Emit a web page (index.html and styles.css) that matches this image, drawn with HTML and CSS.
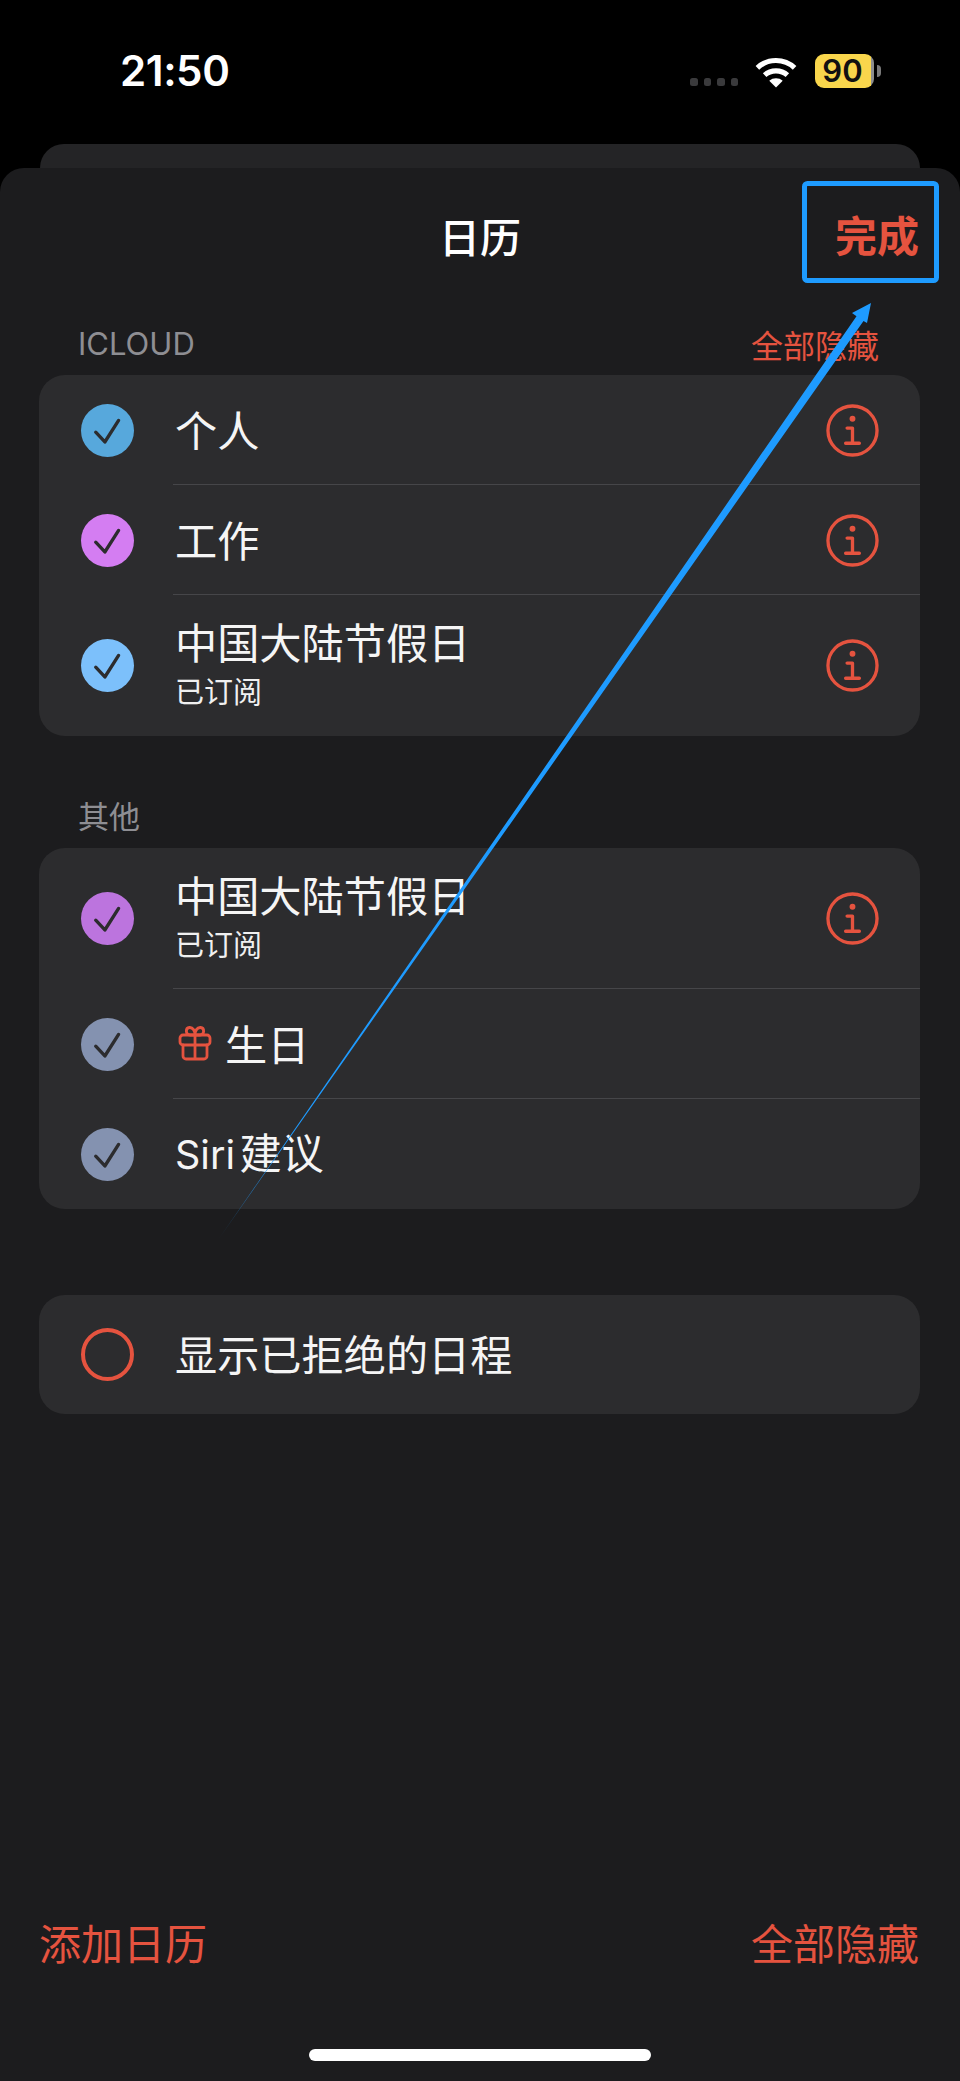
FILE: index.html
```html
<!DOCTYPE html>
<html lang="zh-CN">
<head>
<meta charset="utf-8">
<title>日历</title>
<link rel="stylesheet" href="styles.css">
</head>
<body>
<svg width="0" height="0" class="defs">
  <symbol id="check" viewBox="0 0 54 54"><path d="M15 28.7 24.3 38.7 38.3 16.7" fill="none" stroke="#2c2c2e" stroke-width="3.4" stroke-linecap="round" stroke-linejoin="round"/></symbol>
  <symbol id="info" viewBox="0 0 54 54"><circle cx="27" cy="27" r="25" fill="none" stroke="#e5533f" stroke-width="3.400"/><circle cx="27" cy="15" r="3" fill="#e5533f"/><path d="M21.500 24.500H27V40M20 40H34" fill="none" stroke="#e5533f" stroke-width="3.400" stroke-linecap="round" stroke-linejoin="round"/></symbol>
</svg>
<div class="page">
  <header class="status">
    <div class="time">21:50</div>
    <div class="status-right">
      <div class="signal"><i></i><i></i><i></i><i></i></div>
      <svg class="wifi" viewBox="0 0 42 30" width="44" height="31"><g fill="none" stroke="#fff" stroke-width="5"><path d="M3 10.500C13 1 29 1 39 10.500"/><path d="M10 17.500C16 12 26 12 32 17.500"/></g><path d="M14.500 23C18 19.800 24 19.800 27.500 23L21 29.500Z" fill="#fff"/></svg>
      <div class="battery"><span class="batt-body">90</span><span class="batt-nub"></span></div>
    </div>
  </header>
  <div class="back-sheet"></div>
  <main class="sheet">
    <div class="nav">
      <h1 class="title">日历</h1>
      <span class="done">完成</span>
    </div>
    <div class="section-head head-first">
      <span class="label label-latin">ICLOUD</span>
      <span class="hide-link">全部隐藏</span>
    </div>
    <section class="card">
      <div class="row">
        <span class="dot dot-blue"><svg class="check"><use href="#check"/></svg></span>
        <div class="row-text"><div class="main">个人</div></div>
        <svg class="info"><use href="#info"/></svg>
      </div>
      <div class="row">
        <span class="dot dot-violet"><svg class="check"><use href="#check"/></svg></span>
        <div class="row-text"><div class="main">工作</div></div>
        <svg class="info"><use href="#info"/></svg>
      </div>
      <div class="row row-tall">
        <span class="dot dot-sky"><svg class="check"><use href="#check"/></svg></span>
        <div class="row-text"><div class="main">中国大陆节假日</div><div class="sub">已订阅</div></div>
        <svg class="info"><use href="#info"/></svg>
      </div>
    </section>
    <div class="section-head head-second">
      <span class="label">其他</span>
    </div>
    <section class="card">
      <div class="row row-tall">
        <span class="dot dot-purple"><svg class="check"><use href="#check"/></svg></span>
        <div class="row-text"><div class="main">中国大陆节假日</div><div class="sub">已订阅</div></div>
        <svg class="info"><use href="#info"/></svg>
      </div>
      <div class="row">
        <span class="dot dot-slate"><svg class="check"><use href="#check"/></svg></span>
        <div class="row-text"><div class="main main-gift">
          <svg class="gift" viewBox="0 0 34 36" width="34" height="36"><g fill="none" stroke="#e5533f" stroke-width="2.800" stroke-linejoin="round" stroke-linecap="round"><rect x="2" y="10" width="30" height="10" rx="3"/><path d="M5 20V31a3 3 0 0 0 3 3H26a3 3 0 0 0 3-3V20M17 10V34"/><path d="M17 10H12C7.500 10 7 3 11.500 2.500 15 2.200 17 6 17 10ZM17 10H22C26.500 10 27 3 22.500 2.500 19 2.200 17 6 17 10Z"/></g></svg>
          <span>生日</span>
        </div></div>
      </div>
      <div class="row">
        <span class="dot dot-slate"><svg class="check"><use href="#check"/></svg></span>
        <div class="row-text"><div class="main main-mixed"><span class="latin">Siri</span> 建议</div></div>
      </div>
    </section>
    <section class="card card-single">
      <div class="row row-single">
        <span class="dot dot-empty"></span>
        <div class="row-text"><div class="main">显示已拒绝的日程</div></div>
      </div>
    </section>
    <footer class="footer">
      <span>添加日历</span>
      <span>全部隐藏</span>
    </footer>
    <div class="home"></div>
  </main>
  <svg class="annot" viewBox="0 0 960 2081" width="960" height="2081">
    <defs><linearGradient id="tail" gradientUnits="userSpaceOnUse" x1="218" y1="1240" x2="275" y2="1158"><stop offset="0" stop-color="#1e9bff" stop-opacity="0.1"/><stop offset="1" stop-color="#1e9bff"/></linearGradient></defs>
    <rect x="804.500" y="183.500" width="132" height="97" rx="3" fill="none" stroke="#1e9bff" stroke-width="5"/>
    <polygon points="218,1240 856.500,316.300 852,313 871,303 867,323 863.500,321.100" fill="url(#tail)"/>
  </svg>
</div>
</body>
</html>
```
FILE: styles.css
```css
* { box-sizing: border-box; }
html, body { margin: 0; padding: 0; background: #000; }
body { font-family: "Noto Sans CJK SC", "Inter", sans-serif; color: #fff; }
.defs { position: absolute; }
.page { position: relative; width: 960px; height: 2081px; overflow: hidden; display: flex; flex-direction: column; }

.status { height: 144px; flex: none; display: flex; justify-content: space-between; padding: 48px 79px 0 120px; }
.time { font-family: "Inter", sans-serif; font-weight: 600; font-size: 42px; line-height: 46px; letter-spacing: -0.4px; }
.status-right { display: flex; align-items: flex-start; }
.signal { display: flex; gap: 6px; margin-top: 30px; }
.signal i { width: 7.500px; height: 8px; border-radius: 2.500px; background: #3a3a3c; }
.wifi { margin: 9px 0 0 16px; }
.battery { display: flex; align-items: center; margin: 6px 0 0 17px; height: 34px; }
.batt-body { width: 59px; height: 34px; border-radius: 9px; background: linear-gradient(90deg, #f9d64c 0 95%, #8e8e8e 95%); color: #111; font: 600 31px/34px "Inter", sans-serif; text-align: center; padding-right: 4px; }
.batt-nub { width: 4px; height: 12px; margin-left: 3px; border-radius: 0 6px 6px 0; background: #7a7a7a; }

.back-sheet { height: 24px; flex: none; margin: 0 40px; border-radius: 24px 24px 0 0; background: #242426; }
.sheet { flex: 1; display: flex; flex-direction: column; background: #1c1c1e; border-radius: 24px 24px 0 0; }

.nav { height: 138px; flex: none; display: flex; align-items: center; justify-content: center; position: relative; padding-bottom: 5px; }
.title { margin: 0; font-size: 41px; font-weight: 500; line-height: 50px; letter-spacing: 0; }
.done { position: absolute; right: 41px; top: 41px; font-size: 42px; font-weight: 700; line-height: 50px; color: #e5533f; }

.section-head { flex: none; display: flex; justify-content: space-between; align-items: center; padding: 0 81px 0 78px; }
.head-first { height: 69px; padding-top: 6px; }
.head-second { height: 112px; padding-top: 46px; }
.label { font-size: 31px; line-height: 40px; color: #8e8e93; }
.label-latin { font-family: "Inter", sans-serif; font-size: 31px; }
.hide-link { font-size: 32px; line-height: 40px; color: #e5533f; }

.card { flex: none; margin: 0 40px 0 39px; background: #2c2c2e; border-radius: 26px; overflow: hidden; }
.card-single { margin-top: 86px; }
.row { position: relative; display: flex; align-items: center; height: 110px; padding: 0 41px 0 42px; }
.row-tall { height: 141px; }
.row-tall .row-text { padding-bottom: 5px; }
.row-single { height: 119px; }
.row + .row::before { content: ""; position: absolute; left: 134px; right: 0; top: -1px; height: 1px; background: #464649; }
.dot { width: 53px; height: 53px; flex: none; border-radius: 50%; }
.check { display: block; width: 53px; height: 53px; }
.dot-blue { background: #57a8dc; }
.dot-violet { background: #d47df2; }
.dot-sky { background: #7cc0fb; }
.dot-purple { background: #bc74de; }
.dot-slate { background: #8492b0; }
.dot-empty { border: 4px solid #e5533f; }
.row-text { flex: 1; margin-left: 41px; min-width: 0; }
.main { font-size: 42.200px; line-height: 50px; padding-bottom: 3px; color: #f5f5f5; }
.sub { font-size: 29px; line-height: 42px; color: #f0f0f0; }
.main-gift { display: flex; align-items: center; gap: 13px; margin-left: 3px; }
.main-mixed { word-spacing: -5px; }
.gift { flex: none; }
.latin { font-family: "Inter", sans-serif; font-size: 39.500px; }
.info { width: 53px; height: 53px; flex: none; }

.footer { margin-top: auto; flex: none; height: 60px; display: flex; justify-content: space-between; padding: 0 41px 0 39px; font-size: 42px; line-height: 54px; color: #e5533f; }
.home { flex: none; width: 342px; height: 12px; margin: 74px auto 20px; border-radius: 6px; background: #fff; }

.annot { position: absolute; left: 0; top: 0; pointer-events: none; }
```
